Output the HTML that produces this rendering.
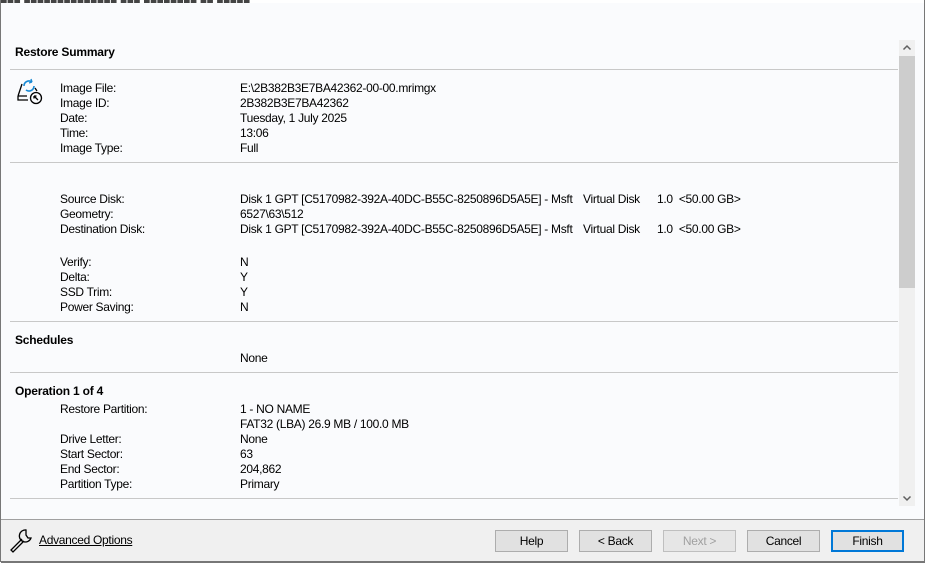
<!DOCTYPE html>
<html><head><style>
body{margin:0;width:926px;height:563px;overflow:hidden;background:#fff;font-family:"Liberation Sans",sans-serif;font-size:12px;color:#000;position:relative}
.t{position:absolute;white-space:pre;line-height:15px;letter-spacing:-0.3px}
.b{font-weight:bold;letter-spacing:-0.2px}
.hr{position:absolute;left:10px;width:888px;height:1px;background:#c8c8c8}
.btn{position:absolute;top:530px;width:71px;height:20px;border:1px solid #adadad;background:#e1e1e1;text-align:center;line-height:20px;font-size:12px;letter-spacing:-0.3px}
</style></head><body>
<div style="position:absolute;left:0;top:0;width:925px;height:562px;border-left:1px solid #777;border-right:1px solid #777;box-sizing:border-box"></div>
<div style="position:absolute;left:1px;top:0;width:923px;height:3px;overflow:hidden;font-size:8px;color:#444;letter-spacing:1px">▀▀▀ ▀▀▀▀▀▀▀▀▀▀▀▀▀▀   ▀▀▀   ▀▀▀▀▀▀▀▀   ▀▀   ▀▀▀▀▀</div>
<div style="position:absolute;left:1px;top:3px;width:923px;height:516px;background:#fafbfd"></div>
<div class="t b" style="left:15px;top:45px">Restore Summary</div>
<div class="hr" style="top:69px"></div>
<svg style="position:absolute;left:16px;top:78px" width="28" height="28" viewBox="0 0 28 28" fill="none" stroke="#000" stroke-width="1.3"><path d="M2 18 L6 6 M2 18 V22 H12 M2 18 H11 M19 10 L21 13"/><path d="M8 8 A5 5 0 0 1 16 4" stroke="#1a8ad4" stroke-width="1.6"/><path d="M16 4 L15 1 M16 4 L13 5" stroke="#1a8ad4"/><path d="M18 8 A5 5 0 0 1 10 12" stroke="#1a8ad4" stroke-width="1.6"/><circle cx="20" cy="20" r="5.5"/><path d="M18 18 L22 22 M18 18 H20.5 M18 18 V20.5"/></svg>
<div class="t" style="left:60px;top:81px">Image File:
Image ID:
Date:
Time:
Image Type:</div>
<div class="t" style="left:240px;top:81px">E:\2B382B3E7BA42362-00-00.mrimgx
2B382B3E7BA42362
Tuesday, 1 July 2025
13:06
Full</div>
<div class="hr" style="top:162px"></div>
<div class="t" style="left:60px;top:192px">Source Disk:
Geometry:
Destination Disk:</div>
<div class="t" style="left:240px;top:192px">Disk 1 GPT [C5170982-392A-40DC-B55C-8250896D5A5E] - Msft

Disk 1 GPT [C5170982-392A-40DC-B55C-8250896D5A5E] - Msft</div>
<div class="t" style="left:240px;top:207px">6527\63\512</div>
<div class="t" style="left:583px;top:192px">Virtual Disk

Virtual Disk</div>
<div class="t" style="left:657px;top:192px">1.0  &lt;50.00 GB&gt;

1.0  &lt;50.00 GB&gt;</div>
<div class="t" style="left:60px;top:255px">Verify:
Delta:
SSD Trim:
Power Saving:</div>
<div class="t" style="left:240px;top:255px">N
Y
Y
N</div>
<div class="hr" style="top:321px"></div>
<div class="t b" style="left:15px;top:333px">Schedules</div>
<div class="t" style="left:240px;top:351px">None</div>
<div class="hr" style="top:372px"></div>
<div class="t b" style="left:15px;top:384px">Operation 1 of 4</div>
<div class="t" style="left:60px;top:402px">Restore Partition:

Drive Letter:
Start Sector:
End Sector:
Partition Type:</div>
<div class="t" style="left:240px;top:402px">1 - NO NAME
FAT32 (LBA) 26.9 MB / 100.0 MB
None
63
204,862
Primary</div>
<div class="hr" style="top:498px"></div>
<div style="position:absolute;left:899px;top:40px;width:16px;height:466px;background:#f0f0f0"></div>
<div style="position:absolute;left:899px;top:56px;width:16px;height:232px;background:#cdcdcd"></div>
<svg style="position:absolute;left:899px;top:40px" width="16" height="16"><path d="M4.5 9.5 L8 6 L11.5 9.5" fill="none" stroke="#606060" stroke-width="1.5"/></svg>
<svg style="position:absolute;left:899px;top:490px" width="16" height="16"><path d="M4.5 6.5 L8 10 L11.5 6.5" fill="none" stroke="#606060" stroke-width="1.5"/></svg>
<div style="position:absolute;left:1px;top:519px;width:923px;height:1px;background:#a0a0a0"></div>
<div style="position:absolute;left:1px;top:520px;width:923px;height:41px;background:#f0f0f0"></div>
<div style="position:absolute;left:1px;top:561px;width:924px;height:2px;background:#777"></div>
<svg style="position:absolute;left:8px;top:527px" width="28" height="28" viewBox="0 0 28 28" fill="none" stroke="#000" stroke-width="1.3"><path d="M18 3 A6 6 0 1 0 23 11 L20 11 L18 8 Z M14 12 L3 23 L5 25 L16 14"/></svg>
<div class="t" style="left:39px;top:533px;text-decoration:underline">Advanced Options</div>
<div class="btn" style="left:495px">Help</div>
<div class="btn" style="left:579px">&lt; Back</div>
<div class="btn" style="left:663px;color:#a0a0a0;border-color:#bfbfbf;background:#e6e6e6">Next &gt;</div>
<div class="btn" style="left:747px">Cancel</div>
<div class="btn" style="left:831px;border:2px solid #0078d7;width:69px;height:18px;line-height:18px">Finish</div>
</body></html>
